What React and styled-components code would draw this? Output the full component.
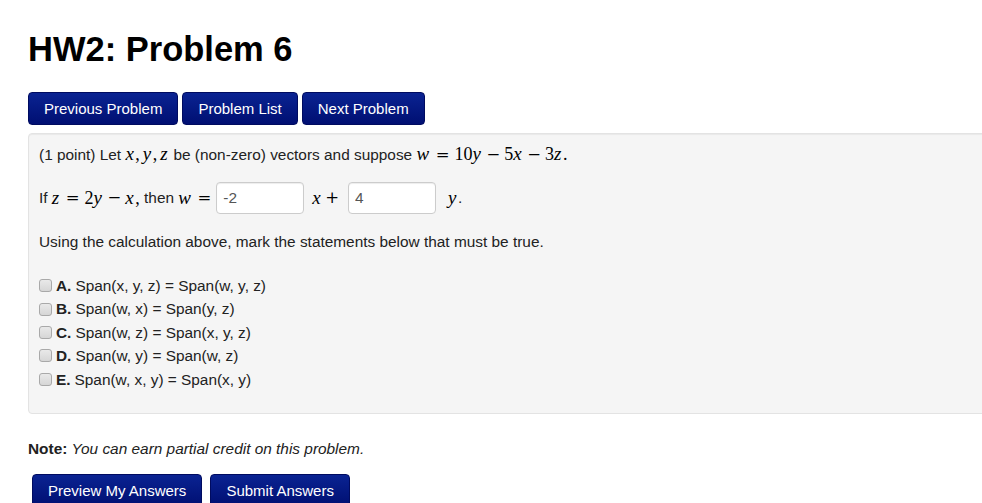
import React from "react";
import styled, { createGlobalStyle } from "styled-components";

const Global = createGlobalStyle`
  html, body {
    margin: 0;
    padding: 0;
    background: #ffffff;
  }
  body {
    font-family: "Liberation Sans", Arial, sans-serif;
    font-size: 15.4px;
    line-height: 22px;
    color: #222;
    overflow: hidden;
  }
`;

const Page = styled.div`
  padding-left: 28px;
  width: 980px;
`;

const Title = styled.h1`
  margin: 29px 0 0;
  font-size: 34.5px;
  line-height: 40px;
  font-weight: bold;
  color: #000;
`;

const NavBar = styled.div`
  display: flex;
  gap: 4px;
  margin-top: 23px;
`;

const Button = styled.button`
  font-family: "Liberation Sans", Arial, sans-serif;
  font-size: 15px;
  line-height: 21px;
  padding: 5px 15px;
  color: #fff;
  background: linear-gradient(to bottom, #0a2392, #000f72);
  border: 1px solid #000b60;
  border-radius: 4px;
  cursor: pointer;
  white-space: nowrap;
`;

const Panel = styled.div`
  margin-top: 8px;
  width: 1000px;
  box-sizing: border-box;
  padding: 9px 10px 22px;
  background: #f5f5f5;
  border: 1px solid #e3e3e3;
  border-radius: 4px;
  box-shadow: inset 0 1px 1px rgba(0, 0, 0, 0.05);
`;

const Line = styled.div`
  margin-top: ${(p) => p.$gap || 0}px;
`;

const AnswerRow = styled.div`
  display: flex;
  align-items: center;
  margin-top: 16px;
`;

/* math: italic variables, upright numbers/punctuation, wide operators */
const Var = styled.span`
  font-family: "Liberation Serif", "DejaVu Serif", serif;
  font-style: italic;
  font-size: 19px;
  color: #000;
  padding-right: 1.5px;
`;

const Num = styled.span`
  font-family: "Liberation Serif", "DejaVu Serif", serif;
  font-size: 18px;
  color: #000;
  margin-right: ${(p) => p.$after || 0}px;
`;

const Op = styled.span`
  font-family: "DejaVu Serif", "Liberation Serif", serif;
  font-size: 16.5px;
  color: #000;
  margin: 0 ${(p) => p.$space ?? 4}px;
`;

const Field = styled.input`
  width: 88px;
  height: 32px;
  box-sizing: border-box;
  padding: 4px 6px;
  margin: 0 ${(p) => p.$right ?? 8}px 0 ${(p) => p.$left ?? 4}px;
  font-family: "Liberation Sans", Arial, sans-serif;
  font-size: 15.4px;
  color: #555;
  background: #fff;
  border: 1px solid #ccc;
  border-radius: 4px;
  box-shadow: inset 0 1px 1px rgba(0, 0, 0, 0.075);
`;

const Options = styled.div`
  margin-top: 21px;
  display: flex;
  flex-direction: column;
`;

const Option = styled.label`
  display: flex;
  align-items: center;
  line-height: 23.4px;
`;

const Box = styled.input.attrs({ type: "checkbox" })`
  appearance: none;
  width: 13px;
  height: 13px;
  margin: 0 4px 0 0;
  border: 1px solid #a9a9a9;
  border-radius: 3px;
  background: linear-gradient(to bottom, #e9e9e9, #d6d6d6);
  box-sizing: border-box;
`;

const Letter = styled.b`
  margin-right: 4px;
`;

const Note = styled.p`
  margin: 24px 0 0;
`;

const Footer = styled.div`
  display: flex;
  gap: 8px;
  margin: 14px 0 0 4px;
`;

const options = [
  ["A.", "Span(x, y, z) = Span(w, y, z)"],
  ["B.", "Span(w, x) = Span(y, z)"],
  ["C.", "Span(w, z) = Span(x, y, z)"],
  ["D.", "Span(w, y) = Span(w, z)"],
  ["E.", "Span(w, x, y) = Span(x, y)"],
];

export default function App() {
  return (
    <Page>
      <Global />
      <Title>HW2: Problem 6</Title>
      <NavBar>
        <Button>Previous Problem</Button>
        <Button>Problem List</Button>
        <Button>Next Problem</Button>
      </NavBar>
      <Panel>
        <Line>
          (1 point) Let <Var>x</Var>
          <Num $after={3}>,</Num>
          <Var>y</Var>
          <Num $after={3}>,</Num>
          <Var>z</Var> be (non-zero) vectors and suppose <Var>w</Var>
          <Op $space={5}>=</Op>
          <Num>10</Num>
          <Var>y</Var>
          <Op>−</Op>
          <Num>5</Num>
          <Var>x</Var>
          <Op>−</Op>
          <Num>3</Num>
          <Var>z</Var>
          <Num>.</Num>
        </Line>
        <AnswerRow>
          <span>If&nbsp;</span>
          <Var>z</Var>
          <Op $space={5}>=</Op>
          <Num>2</Num>
          <Var>y</Var>
          <Op>−</Op>
          <Var>x</Var>
          <Num>,</Num>
          <span>&nbsp;then&nbsp;</span>
          <Var>w</Var>
          <Op $space={5}>=</Op>
          <Field defaultValue="-2" $left={0} />
          <Var>x</Var>
          <Op $space={3}>+</Op>
          <Field defaultValue="4" $left={6} $right={12} />
          <Var>y</Var>
          <span>.</span>
        </AnswerRow>
        <Line $gap={17}>
          Using the calculation above, mark the statements below that must be
          true.
        </Line>
        <Options>
          {options.map(([letter, text]) => (
            <Option key={letter}>
              <Box />
              <Letter>{letter}</Letter>
              {text}
            </Option>
          ))}
        </Options>
      </Panel>
      <Note>
        <b>Note:</b> <i>You can earn partial credit on this problem.</i>
      </Note>
      <Footer>
        <Button>Preview My Answers</Button>
        <Button>Submit Answers</Button>
      </Footer>
    </Page>
  );
}
